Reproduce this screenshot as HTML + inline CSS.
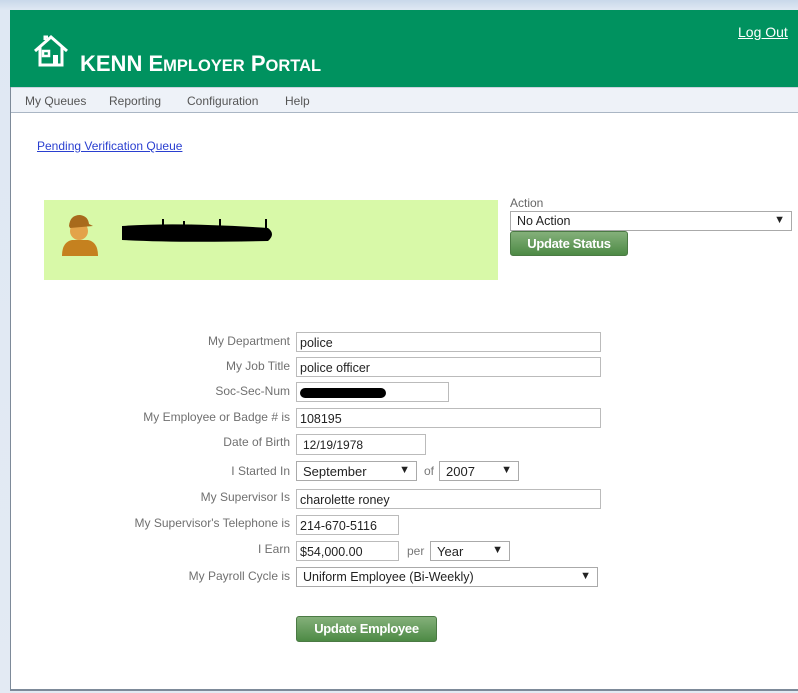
<!DOCTYPE html>
<html><head><style>
*{margin:0;padding:0;box-sizing:border-box}
body{width:798px;height:693px;background:linear-gradient(180deg,#c9d8ea 0,#dfe8f3 10px,#e3eaf3 100%);position:relative;overflow:hidden;font-family:"Liberation Sans",sans-serif}
.frame{position:absolute;left:10px;top:10px;width:788px;height:681px;background:#fff;border-left:1px solid #7d8a99;border-bottom:2px solid #7d8a99}
.hdr{position:absolute;left:10px;top:10px;width:788px;height:77px;background:#00925f}
.title{position:absolute;left:80px;top:51px;color:#fff;font-weight:bold;font-size:22px;letter-spacing:0}
.title small{font-size:16.5px}
.logout{position:absolute;left:738px;top:24px;color:#fff;font-size:14px;text-decoration:underline}
.nav{position:absolute;left:11px;top:87px;width:787px;height:26px;background:#eef2f8;border-top:1px solid #c9d3de;border-bottom:1px solid #aab6c4;font-size:12px;color:#555}
.nav span{position:absolute;top:6px}
a.q{position:absolute;left:37px;top:139px;font-size:12px;color:#2a3fd0;text-decoration:underline}
.green{position:absolute;left:44px;top:200px;width:454px;height:80px;background:#d8f9a8}
.lab{position:absolute;right:508px;font-size:12px;color:#707070;text-align:right;white-space:nowrap}
.in{position:absolute;height:20px;border:1px solid #bbb;background:#fff;font-size:12.5px;color:#222;padding:3px 3px;white-space:nowrap}
.sel{position:absolute;height:20px;border:1px solid #aaa;background:#fff;font-size:13px;color:#222;padding:2px 6px;white-space:nowrap}
.sel:after{content:"▼";position:absolute;right:6px;top:2px;font-size:11px}
.btn{position:absolute;background:linear-gradient(#84b07a,#4d8a45);color:#fff;font-weight:bold;font-size:13px;border-radius:3px;border:1px solid #4b7a44;text-align:center;letter-spacing:-.3px}
</style></head><body>
<div class="frame"></div>
<div class="hdr"></div>
<svg style="position:absolute;left:32px;top:34px" width="40" height="34" viewBox="0 0 40 34"><path d="M3 17 L19 3 L35 17 M8 13 V31 H30 V13 M13 6 V3 H16" fill="none" stroke="#fff" stroke-width="3"/><rect x="11" y="17" width="6" height="5" fill="none" stroke="#fff" stroke-width="2.5"/><rect x="21" y="21" width="5" height="10" fill="#fff"/></svg>
<div class="title">KENN E<small>MPLOYER</small> P<small>ORTAL</small></div>
<div class="logout">Log Out</div>
<div class="nav"><span style="left:14px">My Queues</span><span style="left:98px">Reporting</span><span style="left:176px">Configuration</span><span style="left:274px">Help</span></div>
<a class="q">Pending Verification Queue</a>
<div class="green"></div>
<svg style="position:absolute;left:60px;top:212px" width="40" height="46" viewBox="0 0 40 46"><path d="M2 44 Q2 30 12 28 L28 28 Q38 30 38 44 Z" fill="#c5811f"/><circle cx="19" cy="19" r="9" fill="#e3a34a"/><path d="M9 14 Q10 3 20 3 Q28 4 29 12 L33 14 L10 16 Z" fill="#a86a1c"/></svg>
<svg style="position:absolute;left:118px;top:216px" width="160" height="30"><path d="M4 10 Q60 6 150 12 Q158 18 150 25 Q60 27 4 24 Z" fill="#000"/><path d="M45 3V12M66 5V12M102 3V12M148 3V12" stroke="#000" stroke-width="2"/></svg>
<div style="position:absolute;left:510px;top:196px;font-size:12px;color:#666">Action</div>
<div class="sel" style="left:510px;top:211px;width:282px;font-size:12.5px">No Action</div>
<div class="btn" style="left:510px;top:231px;width:118px;height:25px;line-height:23px">Update Status</div>

<div class="lab" style="top:334px">My Department</div><div class="in" style="left:296px;top:332px;width:305px">police</div>
<div class="lab" style="top:359px">My Job Title</div><div class="in" style="left:296px;top:357px;width:305px">police officer</div>
<div class="lab" style="top:384px">Soc-Sec-Num</div><div class="in" style="left:296px;top:382px;width:153px"><span style="display:inline-block;width:86px;height:10px;background:#000;border-radius:5px;margin-top:2px"></span></div>
<div class="lab" style="top:410px">My Employee or Badge # is</div><div class="in" style="left:296px;top:408px;width:305px">108195</div>
<div class="lab" style="top:435px">Date of Birth</div><div class="in" style="left:296px;top:434px;width:130px;height:21px;font-size:12px;padding-left:6px">12/19/1978</div>
<div class="lab" style="top:464px">I Started In</div><div class="sel" style="left:296px;top:461px;width:121px">September</div>
<div style="position:absolute;left:424px;top:464px;font-size:12px;color:#777">of</div><div class="sel" style="left:439px;top:461px;width:80px">2007</div>
<div class="lab" style="top:490px">My Supervisor Is</div><div class="in" style="left:296px;top:489px;width:305px">charolette roney</div>
<div class="lab" style="top:516px">My Supervisor's Telephone is</div><div class="in" style="left:296px;top:515px;width:103px">214-670-5116</div>
<div class="lab" style="top:542px">I Earn</div><div class="in" style="left:296px;top:541px;width:103px">$54,000.00</div>
<div style="position:absolute;left:407px;top:544px;font-size:12px;color:#777">per</div><div class="sel" style="left:430px;top:541px;width:80px">Year</div>
<div class="lab" style="top:569px">My Payroll Cycle is</div><div class="sel" style="left:296px;top:567px;width:302px;font-size:12.5px">Uniform Employee (Bi-Weekly)</div>
<div class="btn" style="left:296px;top:616px;width:141px;height:26px;line-height:24px">Update Employee</div>
</body></html>
